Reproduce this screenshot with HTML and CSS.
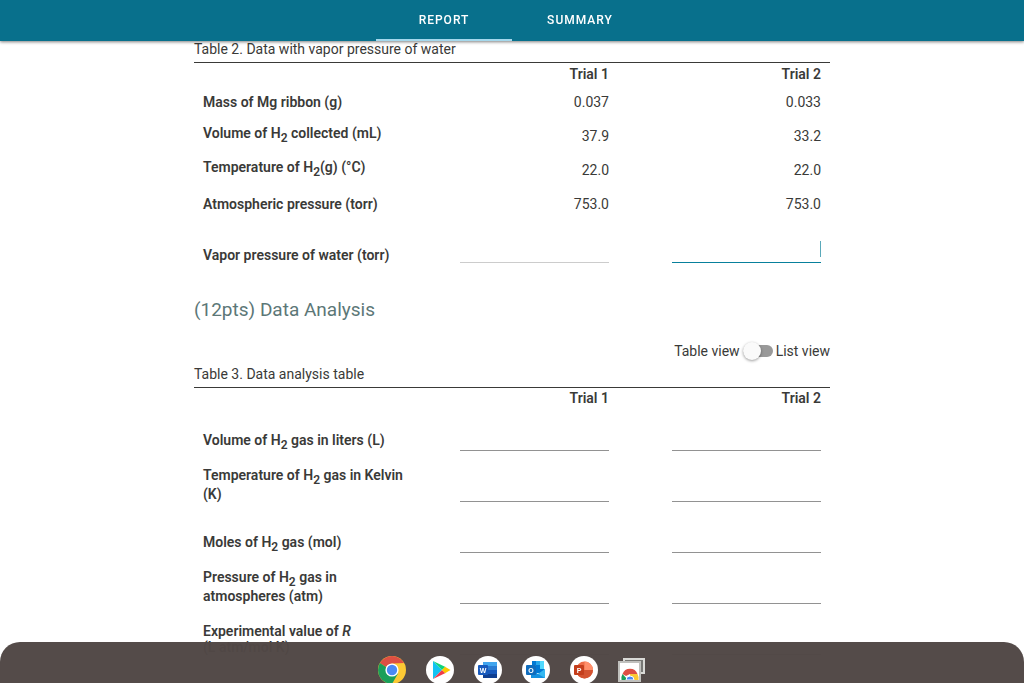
FILE: index.html
```html
<!DOCTYPE html>
<html lang="en">

<head>
    <meta charset="UTF-8">
    <meta name="viewport" content="width=device-width, initial-scale=1.0">
    <title>Report</title>
    <link rel="stylesheet" href="styles.css">
</head>

<body>
    <nav class="tabs">
        <a href="#report" class="tab active">REPORT</a>
        <a href="#summary" class="tab">SUMMARY</a>
    </nav>

    <main class="container" id="report">
        <table class="data-table">
            <caption>Table 2. Data with vapor pressure of water</caption>
            <thead>
                <tr>
                    <td></td>
                    <th scope="col">Trial 1</th>
                    <th scope="col">Trial 2</th>
                </tr>
            </thead>
            <tbody>
                <tr>
                    <th scope="row">Mass of Mg ribbon (g)</th>
                    <td>0.037</td>
                    <td>0.033</td>
                </tr>
                <tr>
                    <th scope="row">Volume of H<sub>2</sub> collected (mL)</th>
                    <td>37.9</td>
                    <td>33.2</td>
                </tr>
                <tr>
                    <th scope="row">Temperature of H<sub>2</sub>(g) (°C)</th>
                    <td>22.0</td>
                    <td>22.0</td>
                </tr>
                <tr>
                    <th scope="row">Atmospheric pressure (torr)</th>
                    <td>753.0</td>
                    <td>753.0</td>
                </tr>
                <tr class="entry">
                    <th scope="row">Vapor pressure of water (torr)</th>
                    <td><input type="text" class="light" aria-label="Vapor pressure of water, trial 1"></td>
                    <td>
                        <div class="field">
                            <input type="text" class="current" aria-label="Vapor pressure of water, trial 2">
                            <span class="caret"></span>
                        </div>
                    </td>
                </tr>
            </tbody>
        </table>

        <h2>(12pts) Data Analysis</h2>

        <div class="view-switch">
            <label for="view">Table view</label>
            <input type="checkbox" id="view" class="switch">
            <label for="view">List view</label>
        </div>

        <table class="data-table">
            <caption>Table 3. Data analysis table</caption>
            <thead>
                <tr>
                    <td></td>
                    <th scope="col">Trial 1</th>
                    <th scope="col">Trial 2</th>
                </tr>
            </thead>
            <tbody>
                <tr class="entry">
                    <th scope="row">Volume of H<sub>2</sub> gas in liters (L)</th>
                    <td><input type="text" aria-label="Volume in liters, trial 1"></td>
                    <td><input type="text" aria-label="Volume in liters, trial 2"></td>
                </tr>
                <tr class="entry">
                    <th scope="row">Temperature of H<sub>2</sub> gas in Kelvin (K)</th>
                    <td><input type="text" aria-label="Temperature in Kelvin, trial 1"></td>
                    <td><input type="text" aria-label="Temperature in Kelvin, trial 2"></td>
                </tr>
                <tr class="entry">
                    <th scope="row">Moles of H<sub>2</sub> gas (mol)</th>
                    <td><input type="text" aria-label="Moles, trial 1"></td>
                    <td><input type="text" aria-label="Moles, trial 2"></td>
                </tr>
                <tr class="entry">
                    <th scope="row">Pressure of H<sub>2</sub> gas in<br>atmospheres (atm)</th>
                    <td><input type="text" aria-label="Pressure in atmospheres, trial 1"></td>
                    <td><input type="text" aria-label="Pressure in atmospheres, trial 2"></td>
                </tr>
                <tr class="entry">
                    <th scope="row">Experimental value of <i>R</i><br>(L atm/mol K)</th>
                    <td><input type="text" aria-label="Experimental value of R, trial 1"></td>
                    <td><input type="text" aria-label="Experimental value of R, trial 2"></td>
                </tr>
            </tbody>
        </table>
    </main>

    <footer class="dock">
        <button type="button" aria-label="Chrome">
            <svg viewBox="0 0 28 28">
                <circle cx="14" cy="14" r="14" fill="#fcc934" />
                <path d="M1.9 7 A14 14 0 0 1 26.1 7 L14 7.5 L8 11z" fill="#dd4f43" />
                <path d="M1.9 7 A14 14 0 0 0 14 28 L20 17.5 L14 14 L8 11z" fill="#1a9f5a" />
                <circle cx="14" cy="14" r="6.6" fill="#fff" />
                <circle cx="14" cy="14" r="5.2" fill="#4a8af4" />
            </svg>
        </button>
        <button type="button" aria-label="Play Store">
            <svg viewBox="0 0 28 28">
                <circle cx="14" cy="14" r="14" fill="#fff" />
                <path d="M7 5 L16 14 L7 23z" fill="#12c3f2" />
                <path d="M7 5 L19.5 11 L16 14z" fill="#10d47b" />
                <path d="M7 23 L16 14 L19.5 17z" fill="#ef3b4c" />
                <path d="M19 10.8 L24.5 14 L19 17.2 L16 14z" fill="#fdc800" />
            </svg>
        </button>
        <button type="button" aria-label="Word">
            <svg viewBox="0 0 28 28">
                <circle cx="14" cy="14" r="14" fill="#fff" />
                <rect x="9" y="6" width="14" height="4" fill="#41a5ee" />
                <rect x="9" y="10" width="14" height="4" fill="#2b7cd3" />
                <rect x="9" y="14" width="14" height="4" fill="#185abd" />
                <rect x="9" y="18" width="14" height="4" fill="#103f91" />
                <rect x="4" y="9" width="10" height="10" rx="1" fill="#185abd" />
                <text x="9" y="17" class="letter">W</text>
            </svg>
        </button>
        <button type="button" aria-label="Outlook">
            <svg viewBox="0 0 28 28">
                <circle cx="14" cy="14" r="14" fill="#fff" />
                <rect x="10" y="5" width="12" height="12" fill="#28a8ea" />
                <path d="M10 5h4v4h-4zM14 9h4v4h-4zM10 13h12v4h-12z" fill="#0078d4" />
                <path d="M18 5h4v8h-4z" fill="#50d9ff" />
                <path d="M9 13 L16 18 L23 13 V22 H9z" fill="#1490df" />
                <path d="M23 13 V22 L16 18z" fill="#35b8f1" />
                <rect x="4" y="9" width="10" height="10" rx="1" fill="#0f6cbd" />
                <text x="9" y="17" class="letter">O</text>
            </svg>
        </button>
        <button type="button" aria-label="PowerPoint">
            <svg viewBox="0 0 28 28">
                <circle cx="14" cy="14" r="14" fill="#fff" />
                <circle cx="14.5" cy="14" r="8.5" fill="#ed6c47" />
                <path d="M14.5 5.5 A8.5 8.5 0 0 1 23 14 H14.5z" fill="#ff8f6b" />
                <path d="M6 14 H23 A8.5 8.5 0 0 1 6 14z" fill="#d35230" />
                <rect x="4" y="9" width="10" height="10" rx="1" fill="#c43e1c" />
                <text x="9" y="17" class="letter">P</text>
            </svg>
        </button>
        <button type="button" aria-label="Remote Desktop">
            <svg viewBox="0 0 28 28">
                <rect x="6" y="3" width="20" height="14" fill="#777774" stroke="#d9d9d6" stroke-width="2" />
                <rect x="1" y="6" width="21" height="19" fill="#fff" stroke="#c0c0bd" stroke-width="2" />
                <path d="M4.500 18 A8 8 0 0 1 19.5 18 H12 L8 20z" fill="#dd4f43" />
                <path d="M3.500 24 A9 9 0 0 1 4.500 18 L10 24z" fill="#1a9f5a" />
                <path d="M12 18 H19.5 A9 9 0 0 1 20.5 24 H12z" fill="#fcc934" />
                <path d="M8 24 A4 4 0 0 1 16 24z" fill="#4a8af4" stroke="#fff" />
                <rect x="0" y="24" width="23" height="2" fill="#c0c0bd" />
            </svg>
        </button>
    </footer>
</body>

</html>
```
FILE: styles.css
```css
* {
    box-sizing: border-box;
}

body {
    margin: 0;
    padding-top: 41px;
    font-family: Roboto, Arial, sans-serif;
    font-size: 14px;
    line-height: 16px;
    color: #3a3a38;
    background-color: #ffffff;
}

.tabs {
    position: fixed;
    top: 0;
    left: 0;
    right: 0;
    z-index: 1;
    height: 41px;
    display: flex;
    justify-content: center;
    background-color: #08708c;
    box-shadow: 0 1px 3px rgba(0, 0, 0, 0.5);
}

.tab {
    width: 136px;
    line-height: 40px;
    font-size: 12px;
    font-weight: 500;
    letter-spacing: 1px;
    text-align: center;
    text-decoration: none;
    color: #ffffff;
}

.tab.active {
    border-bottom: 2px solid #a5d8ec;
}

.container {
    width: 90%;
    max-width: 636px;
    margin: 0 auto;
}

.data-table {
    width: 100%;
    table-layout: fixed;
    border-collapse: collapse;
}

caption {
    padding-bottom: 5px;
    text-align: left;
}

thead {
    border-top: 1px solid #3a3a38;
}

th,
td {
    height: 34px;
    padding: 0 9px 9px;
    text-align: right;
    vertical-align: bottom;
}

th {
    font-weight: 600;
}

tbody th {
    padding-right: 0;
    text-align: left;
}

thead th,
thead td {
    height: 22px;
    padding: 0 9px 3px;
}

.entry th,
.entry td {
    height: 51px;
}

sub {
    font-size: 12px;
    line-height: 12px;
}

input[type="text"] {
    display: block;
    width: 149px;
    height: 24px;
    margin-left: auto;
    padding: 0;
    border: none;
    border-bottom: 1px solid #929292;
    outline: none;
    background: transparent;
    font: inherit;
    text-align: right;
}

input[type="text"].light {
    border-color: #cccccc;
}

input[type="text"].current {
    border-color: #08809c;
}

.field {
    position: relative;
}

.caret {
    position: absolute;
    right: 0;
    top: 2px;
    width: 1px;
    height: 16px;
    background-color: #5aa9ba;
}

h2 {
    margin: 26px 0 21px;
    font-size: 19px;
    line-height: 24px;
    font-weight: 400;
    color: #5c7777;
}

.view-switch {
    display: flex;
    justify-content: flex-end;
    align-items: center;
    gap: 3px;
    margin-bottom: 7px;
}

.switch {
    appearance: none;
    position: relative;
    width: 30px;
    height: 12px;
    margin: 0;
    border-radius: 6px;
    background-color: #999999;
}

.switch::before {
    content: "";
    position: absolute;
    left: 0;
    top: -3px;
    width: 18px;
    height: 18px;
    border-radius: 50%;
    background-color: #fafafa;
    box-shadow: 0 1px 3px rgba(0, 0, 0, 0.4);
}

.dock {
    position: fixed;
    bottom: 0;
    left: 0;
    right: 0;
    height: 41px;
    padding-top: 14px;
    display: flex;
    justify-content: center;
    gap: 20px;
    overflow: hidden;
    border-radius: 20px 20px 0 0;
    background-color: rgba(81, 71, 69, 0.98);
}

.dock button {
    flex: none;
    width: 28px;
    height: 28px;
    padding: 0;
    border: none;
    background: none;
}

.dock svg {
    display: block;
}

.letter {
    font-size: 7px;
    font-weight: 700;
    text-anchor: middle;
    fill: #ffffff;
}
```
